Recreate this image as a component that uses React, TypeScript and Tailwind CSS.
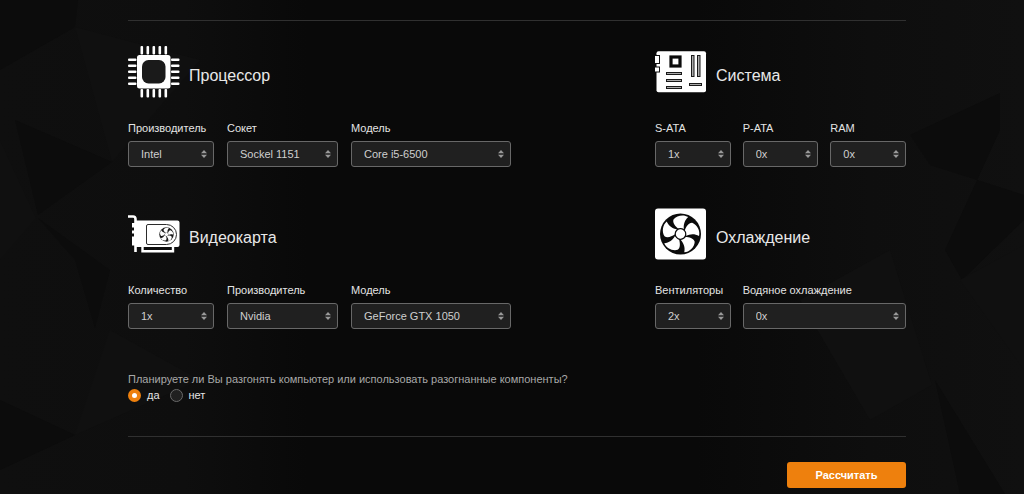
import { useId, useState } from 'react';
import type { ReactNode } from 'react';

const BLADES = [0, 72, 144, 216, 288];
const PINS = [13, 19, 25, 31, 37];

function FanBlades({ fill }: { fill: string }) {
  return (
    <>
      {BLADES.map((angle) => (
        <path
          key={angle}
          transform={`rotate(${angle})`}
          fill={fill}
          d="M-2.6-5.2C-5.5-7.2-9-10.5-8-14C-5-18.5 2-20 6.5-17.500C3-14 2.2-9.500 3-5Z"
        />
      ))}
    </>
  );
}

function CpuIcon() {
  return (
    <svg width="52" height="52" viewBox="0 0 52 52" fill="white" aria-hidden="true">
      {PINS.map((p) => (
        <g key={p}>
          <rect x={p - 0.5} y="0" width="2.6" height="8.5" rx="1" />
          <rect x={p - 0.5} y="43" width="2.6" height="8.5" rx="1" />
          <rect x="0" y={p - 0.5} width="8.5" height="2.6" rx="1" />
          <rect x="43" y={p - 0.5} width="8.5" height="2.6" rx="1" />
        </g>
      ))}
      <rect x="9" y="9" width="33.5" height="33.5" rx="2.5" />
      <rect x="14" y="14" width="23.5" height="23.5" rx="6.5" fill="#1a1a1a" />
    </svg>
  );
}

function GpuIcon() {
  return (
    <svg width="52" height="38" viewBox="0 0 52 38" aria-hidden="true">
      <path d="M0 1.5H5Q7.5 1.5 7.5 4V37" fill="none" stroke="white" strokeWidth="2.6" />
      <path
        fill="white"
        d="M7 5.5H49.5Q51.5 5.5 51.5 7.5V30Q51.5 32 49.5 32H8V30.5H4V21.500H6V18.500H4V15.500H6V12.500H4V8H7Z"
      />
      <path d="M14.500 32V36.300H45V32" fill="none" stroke="white" strokeWidth="2.4" />
      <path
        d="M20 9.500H38.500A10 10 0 0 1 38.500 29.500H20Q18.500 29.500 18.500 28V11Q18.500 9.500 20 9.500Z"
        fill="none"
        stroke="#2b2b2b"
        strokeWidth="1"
      />
      <circle cx="38.5" cy="19.5" r="7.2" fill="#1a1a1a" />
      <g transform="translate(38.500 19.500) scale(0.36)">
        <FanBlades fill="white" />
        <circle r="4.600" fill="white" />
      </g>
    </svg>
  );
}

function BoardIcon() {
  return (
    <svg width="52" height="42" viewBox="0 0 52 42" aria-hidden="true">
      <rect x="1.5" y="0.3" width="49.500" height="41" rx="2" fill="white" />
      <g fill="white" stroke="#111" strokeWidth="1">
        <rect x="-1" y="4.500" width="5.500" height="8" />
        <rect x="-1" y="16" width="5.500" height="5" />
      </g>
      <rect x="16" y="6" width="9" height="9" fill="white" stroke="#0b0b0b" strokeWidth="3.200" />
      <g fill="#aaa" stroke="#1a1a1a" strokeWidth="1">
        <rect x="11.500" y="21.500" width="15" height="2" />
        <rect x="11.500" y="28.500" width="15" height="2" />
        <rect x="11.500" y="35.500" width="15" height="2" />
        <rect x="36.500" y="4.500" width="2.500" height="21" />
        <rect x="42.500" y="4.500" width="2.500" height="21" />
        <rect x="34.500" y="32.500" width="12" height="2" />
      </g>
    </svg>
  );
}

function FanIcon() {
  return (
    <svg width="52" height="52" viewBox="0 0 52 52" aria-hidden="true">
      <rect y="0.5" width="51" height="51" rx="3" fill="white" />
      <circle cx="25.5" cy="26" r="20.500" fill="#0b0b0b" />
      <g transform="translate(25.500 26) rotate(4)">
        <FanBlades fill="white" />
        <circle r="5.300" fill="white" stroke="#0b0b0b" strokeWidth="1.2" />
      </g>
    </svg>
  );
}

// low-contrast polygon shards behind the form
function Backdrop() {
  return (
    <svg
      className="absolute inset-0 h-full w-full"
      viewBox="0 0 1024 494"
      preserveAspectRatio="none"
      aria-hidden="true"
    >
      <defs>
        <linearGradient id="edges">
          <stop offset="0" stopColor="#0f0f0f" />
          <stop offset="0.18" stopColor="#0e0e0e" />
          <stop offset="0.3" stopColor="#090909" />
          <stop offset="0.68" stopColor="#090909" />
          <stop offset="0.85" stopColor="#0e0e0e" />
          <stop offset="1" stopColor="#101010" />
        </linearGradient>
      </defs>
      <path fill="url(#edges)" d="M0 0H1024V494H0Z" />
      <path fill="#0c0c0c" d="M0 0H78L75 27L0 70ZM15 120L112 162L38 215ZM38 218L110 270L95 328L75 260ZM0 400L75 435L0 470Z" />
      <path fill="#101010" d="M0 140L36 218L0 260ZM75 27L200 60L112 162ZM110 330L200 380L75 435Z" />
      <path fill="#0c0c0c" d="M1000 93L910 135L930 165L1024 195V220L962 280L945 250L1000 130ZM935 380L960 494H1005Z" />
      <path fill="#101010" d="M870 420L932 385L890 250L800 300ZM960 280L1024 245V370Z" />
    </svg>
  );
}

type FieldProps = {
  label: string;
  options: string[];
  className?: string;
};

function Field({ label, options, className = '' }: FieldProps) {
  const id = useId();

  return (
    <div className={`flex min-w-0 flex-col gap-1.5 ${className}`}>
      <label htmlFor={id} className="text-[11px] leading-[14px] whitespace-nowrap text-[#e4e4e4]">
        {label}
      </label>
      <div className="relative">
        <select
          id={id}
          className="block h-[26px] w-full appearance-none rounded-[3px] border border-[#686868] bg-[#202020] pr-5 pl-3 text-[11px] text-[#cfcfcf]"
        >
          {options.map((option) => (
            <option key={option}>{option}</option>
          ))}
        </select>
        <svg
          className="pointer-events-none absolute top-2 right-1.5 h-2.5 w-2"
          viewBox="0 0 8 10"
          fill="#999"
          aria-hidden="true"
        >
          <path d="M4 1L7 4.300H1ZM4 9L7 5.700H1Z" />
        </svg>
      </div>
    </div>
  );
}

function Section({ title, icon, children }: { title: string; icon: ReactNode; children: ReactNode }) {
  return (
    <section className="flex flex-col gap-[23px]">
      <div className="flex h-[52px] items-center gap-[9px]">
        {icon}
        <h2 className="pt-2 text-base leading-5 text-[#e8e8e8]">{title}</h2>
      </div>
      {children}
    </section>
  );
}

const COUNTS = ['0x', '1x', '2x', '3x', '4x'];
const ONE_FIRST = ['1x', '2x', '3x', '4x'];
const PARTS_GRID = 'grid grid-cols-[86fr_111fr_160fr] gap-[13px]';
const SYSTEM_GRID = 'grid grid-cols-3 gap-3';

export default function App() {
  const [overclock, setOverclock] = useState('yes');

  const radios = [
    { value: 'yes', label: 'да' },
    { value: 'no', label: 'нет' },
  ];

  return (
    <div className="relative min-h-screen bg-[#090909] font-['Liberation_Sans',Arial,sans-serif]">
      <Backdrop />
      <form
        className="relative pt-5 pr-[118px] pb-1.5 pl-32"
        onSubmit={(e) => e.preventDefault()}
      >
        <div className="grid grid-cols-[383fr_251fr] gap-x-36 gap-y-[41px] border-y border-[#303030] pt-[25px] pb-[34px]">
          <Section title="Процессор" icon={<CpuIcon />}>
            <div className={PARTS_GRID}>
              <Field label="Производитель" options={['Intel', 'AMD']} />
              <Field label="Сокет" options={['Sockel 1151', 'Sockel 1150']} />
              <Field label="Модель" options={['Core i5-6500', 'Core i7-6700']} />
            </div>
          </Section>

          <Section title="Система" icon={<BoardIcon />}>
            <div className={SYSTEM_GRID}>
              <Field label="S-ATA" options={ONE_FIRST} />
              <Field label="P-ATA" options={COUNTS} />
              <Field label="RAM" options={COUNTS} />
            </div>
          </Section>

          <Section title="Видеокарта" icon={<GpuIcon />}>
            <div className={PARTS_GRID}>
              <Field label="Количество" options={ONE_FIRST} />
              <Field label="Производитель" options={['Nvidia', 'AMD']} />
              <Field label="Модель" options={['GeForce GTX 1050', 'GeForce GTX 1060']} />
            </div>
          </Section>

          <Section title="Охлаждение" icon={<FanIcon />}>
            <div className={SYSTEM_GRID}>
              <Field label="Вентиляторы" options={['2x', '3x', '4x']} />
              <Field label="Водяное охлаждение" options={COUNTS} className="col-span-2" />
            </div>
          </Section>

          <fieldset className="col-span-2">
            <legend className="pt-0.5 text-[11px] leading-[14px] text-[#a8a8a8]">
              Планируете ли Вы разгонять компьютер или использовать разогнанные компоненты?
            </legend>
            <div className="flex gap-2.5 pt-0.5">
              {radios.map(({ value, label }) => (
                <label key={value} className="flex items-center gap-1.5 text-[11px] leading-[14px] text-[#e4e4e4]">
                  <input
                    type="radio"
                    name="overclock"
                    value={value}
                    checked={overclock === value}
                    onChange={() => setOverclock(value)}
                    className="size-[13px] appearance-none rounded-full border border-[#686868] bg-[#202020] checked:border-4 checked:border-[#ee800d] checked:bg-white"
                  />
                  {label}
                </label>
              ))}
            </div>
          </fieldset>
        </div>

        <div className="flex justify-end pt-[25px]">
          <button
            type="submit"
            className="h-[26px] w-[119px] rounded-[3px] bg-[#ee800d] text-[11px] font-bold text-white"
          >
            Рассчитать
          </button>
        </div>
      </form>
    </div>
  );
}
